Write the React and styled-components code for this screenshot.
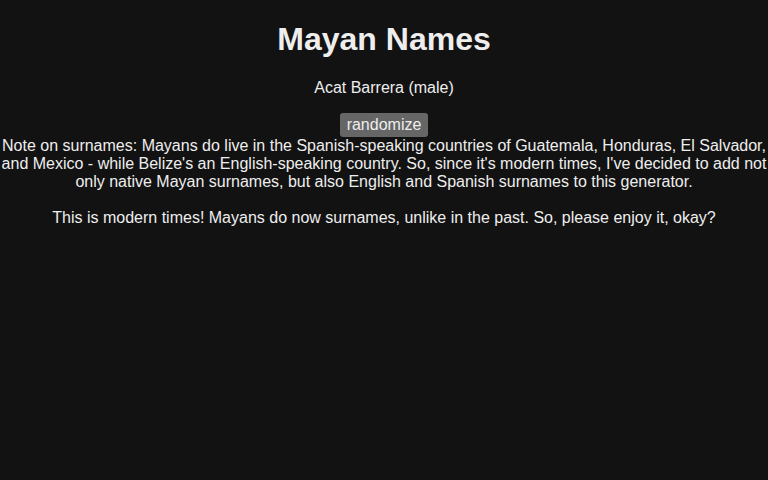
import React, { useState } from "react";
import styled, { createGlobalStyle } from "styled-components";

const GlobalStyle = createGlobalStyle`
  body {
    margin: 0;
    background-color: #121212;
    color: #eeeeee;
    font-family: "Liberation Sans", Arial, sans-serif;
  }
`;

const Page = styled.div`
  text-align: center;
`;

const Title = styled.h1`
  font-size: 32px;
  margin: 21px 0;
`;

const Result = styled.p`
  font-size: 16px;
  line-height: 18px;
  margin: 16px 0;
`;

const Button = styled.button`
  font-family: "Liberation Sans", Arial, sans-serif;
  font-size: 16px;
  line-height: 18px;
  padding: 3px 7px;
  border: none;
  border-radius: 3px;
  background-color: #666666;
  color: #eeeeee;
  cursor: pointer;
`;

const Note = styled.div`
  font-size: 16px;
  line-height: 18px;
`;

const names = [
  ["Acat", "male"],
  ["Ixchel", "female"],
  ["Itzamna", "male"],
  ["Kukulkan", "male"],
];
const surnames = ["Barrera", "Canul", "Smith", "Garcia", "Pech"];

function App() {
  const [person, setPerson] = useState("Acat Barrera (male)");

  const randomize = () => {
    const [first, gender] = names[Math.floor(Math.random() * names.length)];
    const last = surnames[Math.floor(Math.random() * surnames.length)];
    setPerson(`${first} ${last} (${gender})`);
  };

  return (
    <>
      <GlobalStyle />
      <Page>
        <Title>Mayan Names</Title>
        <Result>{person}</Result>
        <div>
          <Button onClick={randomize}>randomize</Button>
        </div>
        <Note>
          Note on surnames: Mayans do live in the Spanish-speaking countries of
          Guatemala, Honduras, El Salvador, and Mexico - while Belize's an
          English-speaking country. So, since it's modern times, I've decided to
          add not only native Mayan surnames, but also English and Spanish
          surnames to this generator.
          <br />
          <br />
          This is modern times! Mayans do now surnames, unlike in the past. So,
          please enjoy it, okay?
        </Note>
      </Page>
    </>
  );
}

export default App;
